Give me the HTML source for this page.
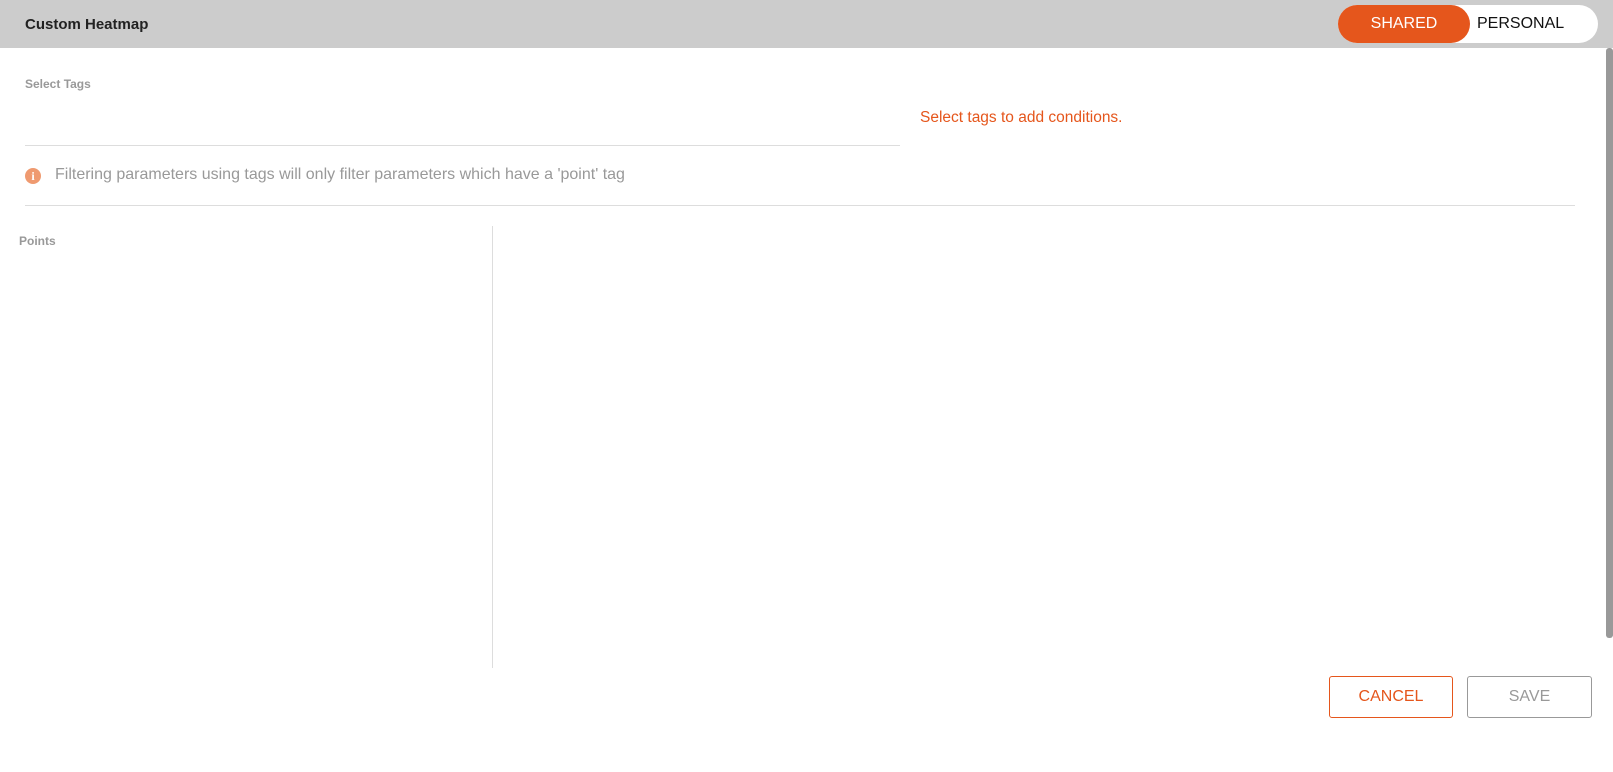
<!DOCTYPE html>
<html><head><style>
body{margin:0;width:1613px;height:772px;background:#fff;font-family:"Liberation Sans",sans-serif;position:relative;overflow:hidden}
.a{position:absolute}
</style></head><body>
<div class="a" style="left:0;top:0;width:1613px;height:48px;background:#cccccc"></div>
<div class="a" style="left:25px;top:16px;font-size:15px;font-weight:bold;color:#222">Custom Heatmap</div>
<div class="a" style="left:1338px;top:5px;width:260px;height:38px;background:#fff;border-radius:19px"></div>
<div class="a" style="left:1338px;top:5px;width:132px;height:38px;background:#e5561c;border-radius:19px;color:#fff;font-size:16px;line-height:38px;text-align:center">SHARED</div>
<div class="a" style="left:1477px;top:5px;line-height:38px;font-size:16px;color:#111">PERSONAL</div>
<div class="a" style="left:1606px;top:48px;width:7px;height:590px;background:#999;border-radius:3px"></div>
<div class="a" style="left:25px;top:77px;font-size:12px;font-weight:bold;color:#999">Select Tags</div>
<div class="a" style="left:25px;top:145px;width:875px;height:1px;background:#ddd"></div>
<div class="a" style="left:920px;top:109px;font-size:15.5px;color:#e5561c">Select tags to add conditions.</div>
<div class="a" style="left:25px;top:168px;width:16px;height:16px;border-radius:50%;background:#ef9a70;color:#fff;font-size:12px;font-weight:bold;text-align:center;line-height:16px;font-family:'Liberation Serif',serif">i</div>
<div class="a" style="left:55px;top:166px;font-size:16px;color:#999">Filtering parameters using tags will only filter parameters which have a 'point' tag</div>
<div class="a" style="left:25px;top:205px;width:1550px;height:1px;background:#ddd"></div>
<div class="a" style="left:19px;top:234px;font-size:12px;font-weight:bold;color:#999">Points</div>
<div class="a" style="left:492px;top:226px;width:1px;height:442px;background:#ddd"></div>
<div class="a" style="left:1329px;top:676px;width:122px;height:40px;border:1px solid #e5561c;border-radius:3px;color:#e5561c;font-size:16px;line-height:40px;text-align:center">CANCEL</div>
<div class="a" style="left:1467px;top:676px;width:123px;height:40px;border:1px solid #999;border-radius:3px;color:#999;font-size:16px;line-height:40px;text-align:center">SAVE</div>
</body></html>
